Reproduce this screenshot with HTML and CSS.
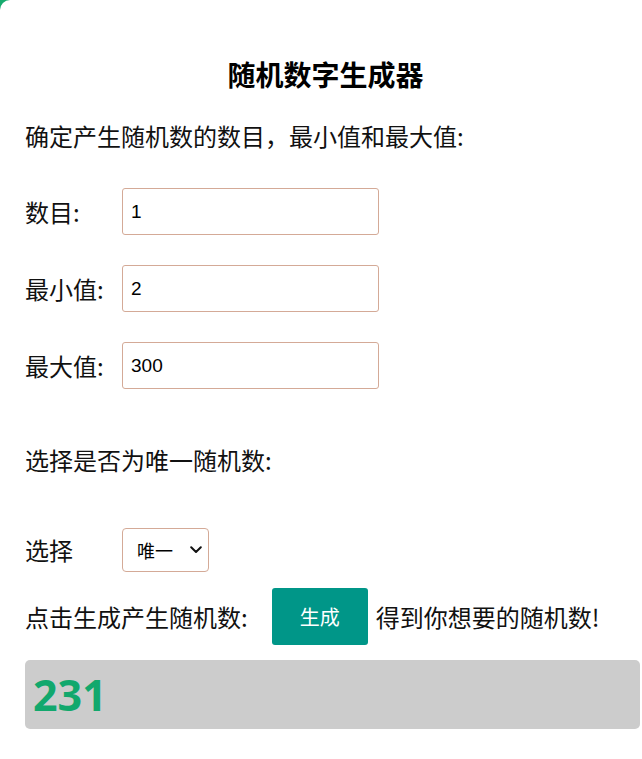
FILE: index.html
```html
<!DOCTYPE html>
<html lang="zh-CN">
<head>
<meta charset="utf-8">
<title>随机数字生成器</title>
<link rel="stylesheet" href="styles.css">
</head>
<body>
<div class="page">
  <h3 class="title">随机数字生成器</h3>
  <p class="intro">确定产生随机数的数目，最小值和最大值:</p>
  <div class="field first">
    <label class="field-label" for="count">数目:</label>
    <input class="field-input" id="count" type="text" value="1">
  </div>
  <div class="field">
    <label class="field-label" for="min">最小值:</label>
    <input class="field-input" id="min" type="text" value="2">
  </div>
  <div class="field">
    <label class="field-label" for="max">最大值:</label>
    <input class="field-input" id="max" type="text" value="300">
  </div>
  <p class="intro second">选择是否为唯一随机数:</p>
  <div class="field select-row">
    <label class="field-label" for="uniq">选择</label>
    <span class="select-wrap">
      <select class="field-select" id="uniq">
        <option>唯一</option>
        <option>不唯一</option>
      </select>
      <svg class="select-arrow" width="12" height="8" viewBox="0 0 12 8" aria-hidden="true">
        <path d="M1.2 1.3 L6 6 L10.8 1.3" fill="none" stroke="#111" stroke-width="2" stroke-linecap="round" stroke-linejoin="round"/>
      </svg>
    </span>
  </div>
  <div class="gen-row">
    <span class="gen-text">点击生成产生随机数:</span>
    <button class="gen-btn" type="button">生成</button>
    <span class="gen-text">得到你想要的随机数!</span>
  </div>
  <div class="result"><span class="result-num">231</span></div>
</div>
</body>
</html>
```

FILE: styles.css
```css
html, body {
  margin: 0;
  padding: 0;
  background: #17ab6e;
}

.page {
  background: #ffffff;
  border-top-left-radius: 10px;
  min-height: 100vh;
  box-sizing: border-box;
  padding: 56px 2px 0 25px;
  font-family: "Noto Sans CJK SC", "Noto Sans", sans-serif;
  font-size: 24px;
  color: #111;
  display: flex;
  flex-direction: column;
  align-items: flex-start;
}

.title {
  align-self: stretch;
  margin: 0 14px 0 0;
  text-align: center;
  font-size: 28px;
  line-height: 36px;
  font-weight: 700;
  color: #000;
}

.intro {
  margin: 28px 0 0 0;
  line-height: 32px;
}

.intro.second {
  margin-top: 55px;
}

.field {
  display: flex;
  align-items: center;
  margin-top: 30px;
}

.field.first {
  margin-top: 36px;
}

.field.select-row {
  margin-top: 52px;
}

.field-label {
  width: 97px;
  line-height: 32px;
}

.field-input {
  box-sizing: border-box;
  width: 257px;
  height: 47px;
  margin: 0;
  padding: 0 8px;
  border: 1px solid #d4aa97;
  border-radius: 3px;
  font-family: "Liberation Sans", Arial, sans-serif;
  font-size: 19px;
  color: #000;
  background: #fff;
  outline: none;
}

.select-wrap {
  position: relative;
  display: inline-flex;
}

.field-select {
  box-sizing: border-box;
  width: 87px;
  height: 44px;
  margin: 0;
  padding: 0 24px 0 14px;
  border: 1px solid #d4aa97;
  border-radius: 4px;
  font-family: "Noto Sans CJK SC", sans-serif;
  font-size: 18px;
  color: #000;
  background: #fff;
  appearance: none;
  -webkit-appearance: none;
}

.select-arrow {
  position: absolute;
  left: 68px;
  top: 18px;
  pointer-events: none;
}

.gen-row {
  display: flex;
  align-items: center;
  margin-top: 16px;
}

.gen-text {
  line-height: 32px;
}

.gen-btn {
  box-sizing: border-box;
  width: 96px;
  height: 57px;
  margin: 0 8px 0 24px;
  border: none;
  border-radius: 3px;
  background: #009688;
  color: #fff;
  font-family: "Noto Sans CJK SC", sans-serif;
  font-size: 20px;
}

.result {
  box-sizing: border-box;
  width: 615px;
  height: 69px;
  margin-top: 15px;
  padding-left: 8px;
  background: #cccccc;
  border-radius: 5px;
  display: flex;
  align-items: center;
}

.result-num {
  font-family: "Open Sans", "Noto Sans", sans-serif;
  font-weight: 700;
  font-size: 43px;
  color: #12a86d;
  line-height: 1;
}
```
